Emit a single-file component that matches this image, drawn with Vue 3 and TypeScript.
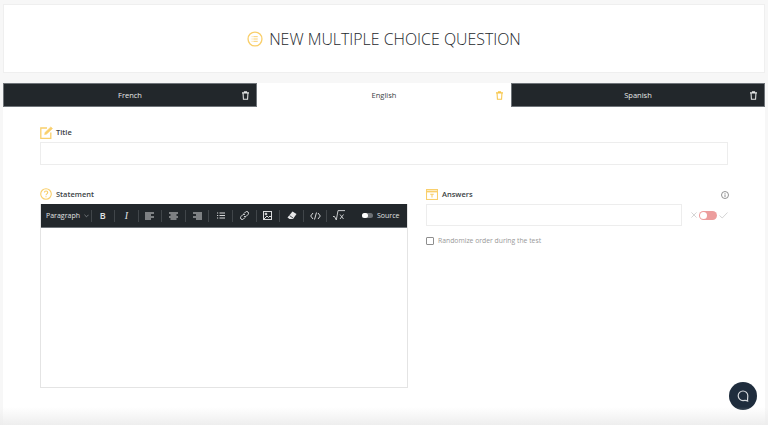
<script setup lang="ts">
const tabs = [
  { name: 'French', active: false },
  { name: 'English', active: true },
  { name: 'Spanish', active: false },
]
</script>

<template>
  <div class="page">
    <header class="head">
      <svg class="head-ico" width="16" height="16" viewBox="0 0 17 17" fill="none" stroke="#f9cf6b">
        <circle cx="8.5" cy="8.5" r="7.4" stroke-width="1.4" />
        <path d="M6.8 6h4.6M6.8 8.5h4.6M6.8 11h4.6M5 6h.8M5 8.5h.8M5 11h.8" stroke-width="1" />
      </svg>
      <h1>NEW MULTIPLE CHOICE QUESTION</h1>
    </header>

    <main class="card">
      <nav class="tabs">
        <div v-for="t in tabs" :key="t.name" class="tab" :class="{ active: t.active }">
          <span>{{ t.name }}</span>
          <svg class="trash" width="7" height="9" viewBox="0 0 8 10" fill="none" stroke="currentColor" stroke-width="1.2">
            <path d="M0 2h8M2.8 2V.7h2.400V2M1.200 2l.4 7.300h4.800L6.800 2" />
          </svg>
        </div>
      </nav>

      <section class="body">
        <div class="label title-label">
          <svg width="13" height="13" viewBox="0 0 13 13" fill="none" stroke="#f9cf6b" stroke-width="1.3">
            <path d="M7 2H.8v10.300h10V6.500" />
            <path d="M4.600 8.600l.5-2.200L10.800.9l1.700 1.700-5.900 5.500z" fill="#f9cf6b" stroke-width=".6" />
          </svg>
          <span>Title</span>
        </div>
        <div class="input title-input"></div>

        <div class="cols">
          <div class="left">
            <div class="label">
              <svg width="12" height="12" viewBox="0 0 12 12" fill="none" stroke="#f9cf6b" stroke-width="1.100">
                <circle cx="6" cy="6" r="5.300" />
                <path d="M4.400 4.600c0-2.100 3.300-2.100 3.300 0 0 1.300-1.700 1.300-1.700 2.700M6 8.200v1.100" />
              </svg>
              <span>Statement</span>
            </div>
            <div class="editor">
              <div class="toolbar">
                <div class="tool para">Paragraph
                  <svg width="5" height="4" viewBox="0 0 6 4" fill="none" stroke="#9a9ea1" stroke-width=".8"><path d="M.5.5L3 3 5.500.5" /></svg>
                </div>
                <i class="sep"></i>
                <div class="tool w"><b class="bold">B</b></div>
                <i class="sep"></i>
                <div class="tool w"><em class="ital">I</em></div>
                <i class="sep"></i>
                <div class="tool w">
                  <svg width="9" height="8" viewBox="0 0 9 8" stroke="#d8dadb" stroke-width="1"><path d="M0 1h9M0 3h6M0 5h9M0 7h6" /></svg>
                </div>
                <i class="sep"></i>
                <div class="tool w">
                  <svg width="9" height="8" viewBox="0 0 9 8" stroke="#d8dadb" stroke-width="1"><path d="M0 1h9M1.500 3h6M0 5h9M1.500 7h6" /></svg>
                </div>
                <i class="sep"></i>
                <div class="tool w">
                  <svg width="9" height="8" viewBox="0 0 9 8" stroke="#d8dadb" stroke-width="1"><path d="M0 1h9M3 3h6M0 5h9M3 7h6" /></svg>
                </div>
                <i class="sep"></i>
                <div class="tool w">
                  <svg width="8" height="7" viewBox="0 0 8 7" stroke="#d8dadb" stroke-width="1"><path d="M0 1h1.200M0 3.500h1.200M0 6h1.200M2.500 1H8M2.500 3.500H8M2.500 6H8" /></svg>
                </div>
                <i class="sep"></i>
                <div class="tool w">
                  <svg width="9" height="9" viewBox="0 0 9 9" fill="none" stroke="#d8dadb" stroke-width="1"><path d="M4 2.500l1.500-1.500a1.500 1.500 0 0 1 2.500 2.500L6 5.500a1.500 1.500 0 0 1-2-.300M5 6.500L3.500 8A1.500 1.500 0 0 1 1 5.500L3 3.500a1.500 1.500 0 0 1 2 .300" /></svg>
                </div>
                <i class="sep"></i>
                <div class="tool w">
                  <svg width="9" height="9" viewBox="0 0 9 9" fill="none" stroke="#d8dadb" stroke-width="1"><rect x=".5" y=".5" width="8" height="8" /><circle cx="3" cy="3" r=".9" fill="#d8dadb" /><path d="M1 8l3-3 1.500 1.500L7 5l1.500 1.500" /></svg>
                </div>
                <i class="sep"></i>
                <div class="tool w">
                  <svg width="10" height="9" viewBox="0 0 10 9"><path d="M5.500.5L9.500 3 6 8H2.500L.5 6.500z" fill="#e6e7e8" /><path d="M2.600 4.600L6 7" stroke="#22272b" stroke-width=".8" /></svg>
                </div>
                <i class="sep"></i>
                <div class="tool w">
                  <svg width="11" height="8" viewBox="0 0 11 8" fill="none" stroke="#d8dadb" stroke-width="1"><path d="M3 1L.7 4 3 7M8 1l2.300 3L8 7M6.500.5l-2 7" /></svg>
                </div>
                <i class="sep"></i>
                <div class="tool w">
                  <svg width="12" height="11" viewBox="0 0 12 11" fill="none" stroke="#d8dadb" stroke-width=".9"><path d="M0 6.500h1.500L3.300 10 5 .6h7M7 4.500l3.500 4.500M10.500 4.500L7 9" /></svg>
                </div>
                <div class="source">
                  <span class="mini"><i></i></span>
                  <span>Source</span>
                </div>
              </div>
              <div class="edit-area"></div>
            </div>
          </div>

          <div class="right">
            <div class="label ans-label">
              <svg width="12" height="11" viewBox="0 0 12 11" fill="none" stroke="#f9cf6b" stroke-width="1.100">
                <rect x=".5" y=".5" width="11" height="10" />
                <path d="M.5 2.500h11" stroke-width="1.800" />
                <path d="M4.200 5.200h3.600M6 5.200v3.200" />
              </svg>
              <span>Answers</span>
              <svg class="info" width="8" height="8" viewBox="0 0 8 8" fill="none" stroke="#777" stroke-width=".8">
                <circle cx="4" cy="4" r="3.500" />
                <path d="M4 3.400V6M4 2v.8" />
              </svg>
            </div>
            <div class="answer">
              <div class="input ans-input"></div>
              <svg class="x" width="6" height="6" viewBox="0 0 7 7" stroke="#c9c9c9" stroke-width=".9"><path d="M.5.5l6 6M6.500.5l-6 6" /></svg>
              <span class="toggle"><i></i></span>
              <svg class="check" width="9" height="7" viewBox="0 0 9 7" fill="none" stroke="#cfcfcf" stroke-width=".9"><path d="M.5 3.500L3.200 6 8.500.5" /></svg>
            </div>
            <label class="random">
              <span class="box"></span>
              <span>Randomize order during the test</span>
            </label>
          </div>
        </div>
      </section>
    </main>

    <button class="chat" aria-label="Chat">
      <svg width="12" height="12" viewBox="0 0 12 12" fill="none" stroke="#d5d8dc" stroke-width="1.200">
        <path d="M6 1a4.800 4.800 0 0 1 4.800 4.800c0 1.500-.4 3.400-.2 5.200-1-.6-2-.9-4.600-.4A4.800 4.800 0 0 1 6 1z" />
      </svg>
    </button>
    <div class="fade"></div>
  </div>
</template>

<style>
html, body { margin: 0; background: #f7f7f7; }
</style>

<style scoped>
.page {
  position: relative;
  width: 768px;
  height: 425px;
  overflow: hidden;
  box-sizing: border-box;
  padding: 4px 3px 0;
  background: #f7f7f7;
  font-family: "Open Sans", sans-serif;
  color: #2b3035;
}
.head {
  height: 69px;
  box-sizing: border-box;
  background: #fff;
  border: 1px solid #efefef;
  display: flex;
  align-items: center;
  justify-content: center;
  gap: 6px;
  padding-top: 1px;
}
.head-ico { flex: none; }
h1 {
  margin: 0;
  font-size: 15.900px;
  font-weight: 300;
  line-height: 22px;
  color: #24282c;
}
.card {
  margin-top: 10px;
  height: 342px;
  background: #fff;
}
.tabs { display: flex; height: 24px; }
.tab {
  position: relative;
  flex: 1;
  background: #22272b;
  color: #e6e7e8;
  border: 1px solid #6f7479;
  box-sizing: border-box;
  display: flex;
  align-items: center;
  justify-content: center;
  font-size: 7.500px;
  font-weight: 400;
}
.tab.active {
  background: #fff;
  color: #3a3f44;
  border-color: #fff;
}
.trash { position: absolute; right: 7px; top: 7px; }
.tab.active .trash { color: #f7c64a; }
.body { padding: 18px 37px 0; }
.label {
  display: flex;
  align-items: center;
  gap: 4px;
  height: 12px;
  font-size: 7.500px;
  font-weight: 600;
  color: #3a3f44;
}
.title-label { height: 14px; gap: 3px; }
.input {
  box-sizing: border-box;
  border: 1px solid #ededed;
  background: #fff;
}
.title-input { width: 688px; height: 23px; margin-top: 3px; }
.cols { display: flex; margin-top: 23px; }
.left { width: 368px; flex: none; }
.editor { margin-top: 4px; border: 1px solid #e4e4e4; border-top: 0; box-sizing: border-box; }
.toolbar {
  display: flex;
  align-items: center;
  height: 24px;
  background: #22272b;
  color: #e0e2e3;
  border-bottom: 1px solid #6f7479;
  box-sizing: border-box;
}
.tool {
  display: flex;
  align-items: center;
  justify-content: center;
  height: 100%;
}
.para { width: 49.500px; font-size: 7px; font-weight: 400; gap: 4px; flex: none; justify-content: flex-start; padding-left: 5px; box-sizing: border-box; }
.w { width: 22.600px; flex: none; }
.sep { width: 1px; height: 12px; background: #41464a; flex: none; }
.bold { font-size: 9px; font-weight: 600; }
.ital { font-family: "Liberation Serif", serif; font-size: 10px; }
.source {
  display: flex;
  align-items: center;
  gap: 4px;
  font-size: 7px;
  margin-left: 12px;
}
.mini {
  width: 11px;
  height: 5px;
  border-radius: 3px;
  background: #6d7175;
  display: inline-block;
  position: relative;
}
.mini i {
  position: absolute;
  left: 0;
  top: 0;
  width: 6px;
  height: 5px;
  border-radius: 3px;
  background: #fff;
}
.edit-area { height: 159px; background: #fff; }
.right { width: 303px; margin-left: 18px; flex: none; }
.ans-label { position: relative; gap: 4px; }
.info { position: absolute; left: 295px; top: 3px; }
.answer {
  display: flex;
  align-items: center;
  margin-top: 4px;
}
.ans-input { width: 256px; height: 22px; flex: none; }
.x { margin-left: 9px; }
.toggle {
  margin-left: 2px;
  width: 18px;
  height: 9px;
  border-radius: 5px;
  background: #ec9d9d;
  position: relative;
  flex: none;
}
.toggle i {
  position: absolute;
  left: 1px;
  top: 1px;
  width: 7px;
  height: 7px;
  border-radius: 50%;
  background: #fff;
}
.check { margin-left: 2px; }
.random {
  display: flex;
  align-items: center;
  gap: 4px;
  margin-top: 10px;
  font-size: 6.800px;
  color: #999;
}
.box {
  width: 6px;
  height: 6px;
  border: 1px solid #8e8e8e;
  border-radius: 1px;
  flex: none;
}
.chat {
  position: absolute;
  left: 729px;
  top: 382px;
  width: 28px;
  height: 28px;
  padding: 0;
  border: 0;
  border-radius: 50%;
  background: #1f2d3d;
  display: flex;
  align-items: center;
  justify-content: center;
}
.fade {
  position: absolute;
  left: 0;
  right: 0;
  bottom: 0;
  height: 18px;
  background: linear-gradient(rgba(240, 240, 240, 0), rgba(236, 236, 236, 0.9));
  pointer-events: none;
}
</style>
